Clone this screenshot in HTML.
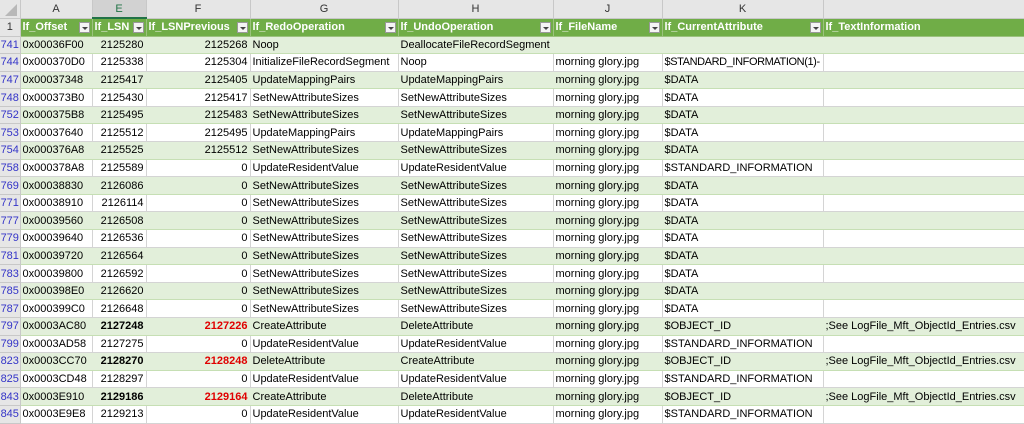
<!DOCTYPE html>
<html><head><meta charset="utf-8"><style>
body{margin:0;width:1024px;height:421px;overflow:hidden;background:#fff;font-family:"Liberation Sans",Arial,sans-serif;font-size:11px;color:#000}
table{border-collapse:collapse;table-layout:fixed;position:absolute;left:0;top:0;width:1024px}
td{padding:0 2px;white-space:nowrap;overflow:hidden;border-right:1px solid #d4d4d4;border-bottom:1px solid #d4d4d4;height:17.6px;box-sizing:border-box;line-height:16px}
tr.ch td{height:18px;background:#e6e6e6;color:#333;text-align:center;border-color:#c8c8c8;font-size:11px}
tr.ch td.sel{background:#d2d2d2;border-bottom:2px solid #217346;color:#217346}
tr.hd td{height:18px;background:#70ad47;color:#fff;font-weight:bold;position:relative;border-color:#9bc27e}
tr.hd td.rh{background:#e6e6e6;color:#333;font-weight:normal;text-align:center;border-color:#c8c8c8}
.fb{position:absolute;right:2px;top:3px;width:11px;height:11px;background:#f4f4f4;border:1px solid #999;box-sizing:border-box}
.fb:after{content:"";position:absolute;left:2px;top:4px;border-left:3px solid transparent;border-right:3px solid transparent;border-top:3px solid #444}
td.rh{background:#e6e6e6;color:#3434c8;text-align:center;border-color:#c8c8c8;padding:0}
tr.g td{background:#e2efda;border-bottom-color:#c6dfb4;border-right-color:#e2efda}
tr.g td.rh{background:#e6e6e6;border-right-color:#c8c8c8;border-bottom-color:#c8c8c8}
.r{text-align:right}
.b{font-weight:bold}
.red{color:#e00000;font-weight:bold}
</style></head><body>
<table>
<colgroup><col style="width:20px"><col style="width:72px"><col style="width:54px"><col style="width:104px"><col style="width:148px"><col style="width:155px"><col style="width:109px"><col style="width:161px"><col style="width:201px"></colgroup>
<tr class="ch"><td style="background:#e6e6e6"></td><td>A</td><td class="sel">E</td><td>F</td><td>G</td><td>H</td><td>J</td><td>K</td><td></td></tr>
<tr class="hd"><td class="rh">1</td><td>lf_Offset<span class="fb"></span></td><td>lf_LSN<span class="fb"></span></td><td>lf_LSNPrevious<span class="fb"></span></td><td>lf_RedoOperation<span class="fb"></span></td><td>lf_UndoOperation<span class="fb"></span></td><td>lf_FileName<span class="fb"></span></td><td>lf_CurrentAttribute<span class="fb"></span></td><td>lf_TextInformation</td></tr>
<tr class="g"><td class="rh">741</td><td>0x00036F00</td><td class="r">2125280</td><td class="r">2125268</td><td>Noop</td><td>DeallocateFileRecordSegment</td><td></td><td></td><td></td></tr>
<tr><td class="rh">744</td><td>0x000370D0</td><td class="r">2125338</td><td class="r">2125304</td><td>InitializeFileRecordSegment</td><td>Noop</td><td>morning glory.jpg</td><td style="letter-spacing:-0.4px">$STANDARD_INFORMATION(1)-</td><td></td></tr>
<tr class="g"><td class="rh">747</td><td>0x00037348</td><td class="r">2125417</td><td class="r">2125405</td><td>UpdateMappingPairs</td><td>UpdateMappingPairs</td><td>morning glory.jpg</td><td>$DATA</td><td></td></tr>
<tr><td class="rh">748</td><td>0x000373B0</td><td class="r">2125430</td><td class="r">2125417</td><td>SetNewAttributeSizes</td><td>SetNewAttributeSizes</td><td>morning glory.jpg</td><td>$DATA</td><td></td></tr>
<tr class="g"><td class="rh">752</td><td>0x000375B8</td><td class="r">2125495</td><td class="r">2125483</td><td>SetNewAttributeSizes</td><td>SetNewAttributeSizes</td><td>morning glory.jpg</td><td>$DATA</td><td></td></tr>
<tr><td class="rh">753</td><td>0x00037640</td><td class="r">2125512</td><td class="r">2125495</td><td>UpdateMappingPairs</td><td>UpdateMappingPairs</td><td>morning glory.jpg</td><td>$DATA</td><td></td></tr>
<tr class="g"><td class="rh">754</td><td>0x000376A8</td><td class="r">2125525</td><td class="r">2125512</td><td>SetNewAttributeSizes</td><td>SetNewAttributeSizes</td><td>morning glory.jpg</td><td>$DATA</td><td></td></tr>
<tr><td class="rh">758</td><td>0x000378A8</td><td class="r">2125589</td><td class="r">0</td><td>UpdateResidentValue</td><td>UpdateResidentValue</td><td>morning glory.jpg</td><td>$STANDARD_INFORMATION</td><td></td></tr>
<tr class="g"><td class="rh">769</td><td>0x00038830</td><td class="r">2126086</td><td class="r">0</td><td>SetNewAttributeSizes</td><td>SetNewAttributeSizes</td><td>morning glory.jpg</td><td>$DATA</td><td></td></tr>
<tr><td class="rh">771</td><td>0x00038910</td><td class="r">2126114</td><td class="r">0</td><td>SetNewAttributeSizes</td><td>SetNewAttributeSizes</td><td>morning glory.jpg</td><td>$DATA</td><td></td></tr>
<tr class="g"><td class="rh">777</td><td>0x00039560</td><td class="r">2126508</td><td class="r">0</td><td>SetNewAttributeSizes</td><td>SetNewAttributeSizes</td><td>morning glory.jpg</td><td>$DATA</td><td></td></tr>
<tr><td class="rh">779</td><td>0x00039640</td><td class="r">2126536</td><td class="r">0</td><td>SetNewAttributeSizes</td><td>SetNewAttributeSizes</td><td>morning glory.jpg</td><td>$DATA</td><td></td></tr>
<tr class="g"><td class="rh">781</td><td>0x00039720</td><td class="r">2126564</td><td class="r">0</td><td>SetNewAttributeSizes</td><td>SetNewAttributeSizes</td><td>morning glory.jpg</td><td>$DATA</td><td></td></tr>
<tr><td class="rh">783</td><td>0x00039800</td><td class="r">2126592</td><td class="r">0</td><td>SetNewAttributeSizes</td><td>SetNewAttributeSizes</td><td>morning glory.jpg</td><td>$DATA</td><td></td></tr>
<tr class="g"><td class="rh">785</td><td>0x000398E0</td><td class="r">2126620</td><td class="r">0</td><td>SetNewAttributeSizes</td><td>SetNewAttributeSizes</td><td>morning glory.jpg</td><td>$DATA</td><td></td></tr>
<tr><td class="rh">787</td><td>0x000399C0</td><td class="r">2126648</td><td class="r">0</td><td>SetNewAttributeSizes</td><td>SetNewAttributeSizes</td><td>morning glory.jpg</td><td>$DATA</td><td></td></tr>
<tr class="g"><td class="rh">797</td><td>0x0003AC80</td><td class="r b">2127248</td><td class="r red">2127226</td><td>CreateAttribute</td><td>DeleteAttribute</td><td>morning glory.jpg</td><td>$OBJECT_ID</td><td>;See LogFile_Mft_ObjectId_Entries.csv</td></tr>
<tr><td class="rh">799</td><td>0x0003AD58</td><td class="r">2127275</td><td class="r">0</td><td>UpdateResidentValue</td><td>UpdateResidentValue</td><td>morning glory.jpg</td><td>$STANDARD_INFORMATION</td><td></td></tr>
<tr class="g"><td class="rh">823</td><td>0x0003CC70</td><td class="r b">2128270</td><td class="r red">2128248</td><td>DeleteAttribute</td><td>CreateAttribute</td><td>morning glory.jpg</td><td>$OBJECT_ID</td><td>;See LogFile_Mft_ObjectId_Entries.csv</td></tr>
<tr><td class="rh">825</td><td>0x0003CD48</td><td class="r">2128297</td><td class="r">0</td><td>UpdateResidentValue</td><td>UpdateResidentValue</td><td>morning glory.jpg</td><td>$STANDARD_INFORMATION</td><td></td></tr>
<tr class="g"><td class="rh">843</td><td>0x0003E910</td><td class="r b">2129186</td><td class="r red">2129164</td><td>CreateAttribute</td><td>DeleteAttribute</td><td>morning glory.jpg</td><td>$OBJECT_ID</td><td>;See LogFile_Mft_ObjectId_Entries.csv</td></tr>
<tr><td class="rh">845</td><td>0x0003E9E8</td><td class="r">2129213</td><td class="r">0</td><td>UpdateResidentValue</td><td>UpdateResidentValue</td><td>morning glory.jpg</td><td>$STANDARD_INFORMATION</td><td></td></tr>
</table>
<div style="position:absolute;left:5px;top:4px;width:0;height:0;border-left:12px solid transparent;border-bottom:12px solid #b8b8b8"></div>
</body></html>
